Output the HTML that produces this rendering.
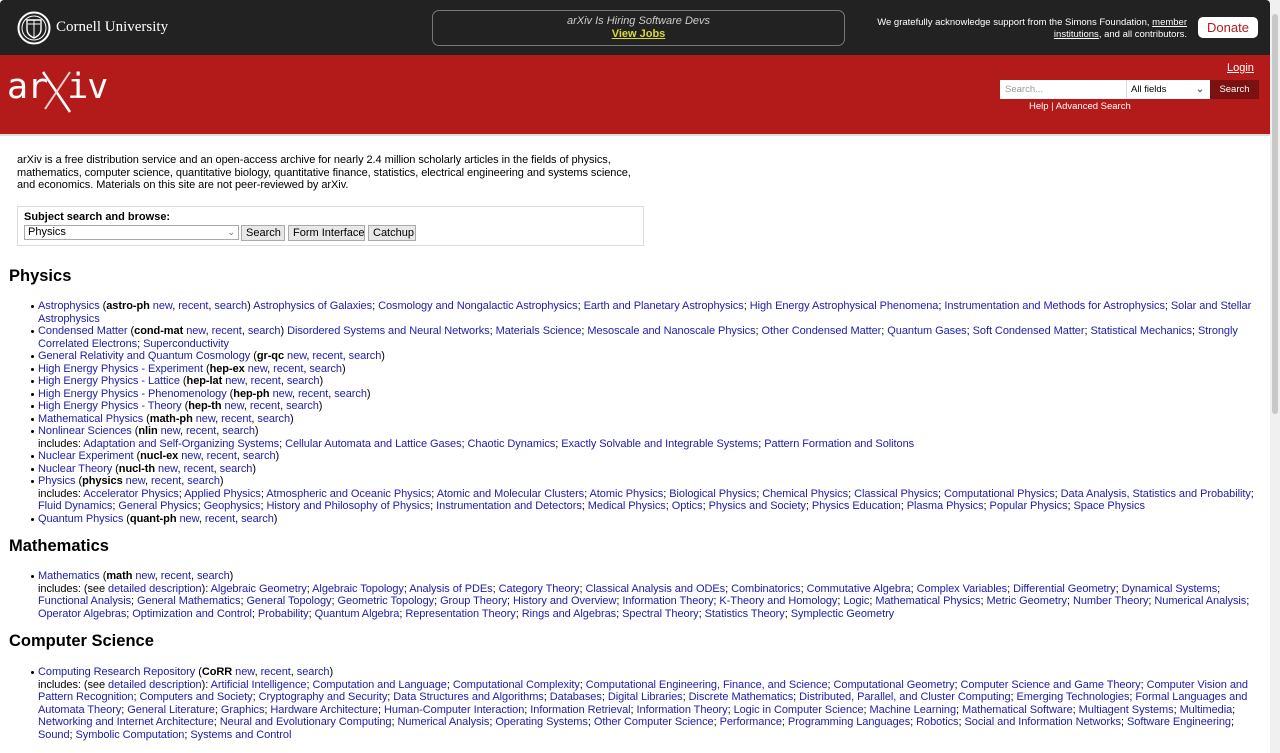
<!DOCTYPE html>
<html><head><meta charset="utf-8"><style>
*{margin:0;padding:0;box-sizing:border-box}
body{width:1280px;height:753px;overflow:hidden;background:#fff;font-family:"Liberation Sans",Arial,sans-serif;font-size:11px;color:#000;position:relative}
a{color:#1d1da8;text-decoration:none}
.top{position:absolute;left:0;top:0;width:1270px;height:55px;background:#222;border-radius:4px 4px 0 0}
.red{position:absolute;left:0;top:55px;width:1270px;height:81px;background:#b31b1b;border-bottom:2px solid #ddd}
.sb{position:absolute;right:0;top:0;width:10px;height:753px;background:#f0f0f0}
.sb i{position:absolute;left:2px;top:14px;width:6px;height:400px;background:#c8c8c8;border-radius:3px}
.abs{position:absolute}
.l{height:12.5px;line-height:12.5px;white-space:nowrap;letter-spacing:-0.06px}
ul{list-style:none}
li{position:relative}
li.b::before{content:"";position:absolute;left:-7px;top:5px;width:3px;height:3px;border-radius:50%;background:#000}
h2{position:absolute;left:9px;font-size:16.5px;font-weight:bold}
b{font-weight:bold;color:#000}
button{font-family:inherit;font-size:11px;background:#e8e8e8;border:1px solid #aaa;height:16px;padding:0 4px;position:absolute;top:0;white-space:nowrap}
</style></head><body>
<div class="top">
 <svg class="abs" style="left:17px;top:11px" width="34" height="34" viewBox="0 0 34 34"><circle cx="17" cy="17" r="15.5" fill="none" stroke="#fff" stroke-width="2"/><circle cx="17" cy="17" r="12" fill="none" stroke="#fff" stroke-width="1"/><path d="M10 9h14v9c0 5-3 7-7 9-4-2-7-4-7-9z" fill="none" stroke="#fff" stroke-width="1.4"/><path d="M11 13h12M17 9v17" stroke="#fff"/></svg>
 <div class="abs" style="left:56px;top:19px;color:#fff;font-family:'Liberation Serif',serif;font-size:15px">Cornell University</div>
 <div class="abs" style="left:432px;top:10px;width:413px;height:36px;border:1px solid #777;border-radius:7px;text-align:center">
  <div style="color:#ccc;font-style:italic;margin-top:4px">arXiv Is Hiring Software Devs</div>
  <div style="color:#d7d93a;text-decoration:underline;font-weight:bold;margin-top:1px">View Jobs</div>
 </div>
 <div class="abs" style="right:83px;top:17px;color:#fff;font-size:9.5px;text-align:right;line-height:12px">We gratefully acknowledge support from the Simons Foundation, <u>member</u><br><u>institutions</u>, and all contributors.</div>
 <div class="abs" style="left:1198px;top:17px;width:60px;height:21px;background:#fff;border-radius:5px;color:#b31b1b;font-size:13px;text-align:center;line-height:21px">Donate</div>
</div>
<div class="red">
 <div class="abs" style="left:7px;top:12px;color:#fff;font-family:'DejaVu Sans Mono',monospace;font-size:35px;letter-spacing:-1px">ar<span style="opacity:0">X</span>iv</div>
 <svg class="abs" style="left:40px;top:14px" width="34" height="46"><path d="M3 3L30 43" stroke="#fff" stroke-width="2.5"/><path d="M30 3L5 40" stroke="#f0d0d0" stroke-width="2"/></svg>
 <div class="abs" style="left:1227px;top:7px;color:#fff;text-decoration:underline;font-size:11px">Login</div>
 <div class="abs" style="left:1000px;top:25px;width:126px;height:19px;background:#fff;color:#999;font-size:9.5px;line-height:19px;padding-left:5px">Search...</div>
 <div class="abs" style="left:1126px;top:25px;width:84px;height:19px;background:#fff;border-left:1px solid #ddd;font-size:9.5px;line-height:19px;padding-left:4px">All fields<span style="position:absolute;right:6px;color:#3a6fb0;font-weight:bold">&#8964;</span></div>
 <div class="abs" style="left:1210px;top:25px;width:49px;height:19px;background:#7a1212;color:#fff;font-size:9.5px;line-height:19px;text-align:center">Search</div>
 <div class="abs" style="left:1029px;top:46px;color:#fff;font-size:9.5px">Help | Advanced Search</div>
</div>
<div class="sb"><i></i></div>

<div class="abs" style="left:17px;top:154px">
 <div class="l">arXiv is a free distribution service and an open-access archive for nearly 2.4 million scholarly articles in the fields of physics,</div>
 <div class="l">mathematics, computer science, quantitative biology, quantitative finance, statistics, electrical engineering and systems science,</div>
 <div class="l">and economics. Materials on this site are not peer-reviewed by arXiv.</div>
</div>
<div class="abs" style="left:17px;top:206px;width:627px;height:40px;border:1px solid #ddd">
 <div class="abs" style="left:6px;top:4px;font-weight:bold">Subject search and browse:</div>
 <div class="abs" style="left:6px;top:18px;width:215px;height:14px">
  <div class="abs" style="left:0;top:0;width:215px;height:15px;border:1px solid #aaa;padding-left:3px;line-height:13px">Physics<span style="position:absolute;right:3px;color:#666;font-size:9px">&#8964;</span></div>
  <button style="left:217px;width:44px">Search</button>
  <button style="left:264px;width:77px">Form Interface</button>
  <button style="left:344px;width:48px">Catchup</button>
 </div>
</div>

<h2 style="top:267px">Physics</h2>
<ul class="abs" style="left:38px;top:300px">
<li class="b"><div class="l"><a>Astrophysics</a> (<b>astro-ph</b> <a>new</a>, <a>recent</a>, <a>search</a>) <a>Astrophysics of Galaxies</a>; <a>Cosmology and Nongalactic Astrophysics</a>; <a>Earth and Planetary Astrophysics</a>; <a>High Energy Astrophysical Phenomena</a>; <a>Instrumentation and Methods for Astrophysics</a>; <a>Solar and Stellar</a></div><div class="l"><a>Astrophysics</a></div></li>
<li class="b"><div class="l"><a>Condensed Matter</a> (<b>cond-mat</b> <a>new</a>, <a>recent</a>, <a>search</a>) <a>Disordered Systems and Neural Networks</a>; <a>Materials Science</a>; <a>Mesoscale and Nanoscale Physics</a>; <a>Other Condensed Matter</a>; <a>Quantum Gases</a>; <a>Soft Condensed Matter</a>; <a>Statistical Mechanics</a>; <a>Strongly</a></div><div class="l"><a>Correlated Electrons</a>; <a>Superconductivity</a></div></li>
<li class="b"><div class="l"><a>General Relativity and Quantum Cosmology</a> (<b>gr-qc</b> <a>new</a>, <a>recent</a>, <a>search</a>)</div></li>
<li class="b"><div class="l"><a>High Energy Physics - Experiment</a> (<b>hep-ex</b> <a>new</a>, <a>recent</a>, <a>search</a>)</div></li>
<li class="b"><div class="l"><a>High Energy Physics - Lattice</a> (<b>hep-lat</b> <a>new</a>, <a>recent</a>, <a>search</a>)</div></li>
<li class="b"><div class="l"><a>High Energy Physics - Phenomenology</a> (<b>hep-ph</b> <a>new</a>, <a>recent</a>, <a>search</a>)</div></li>
<li class="b"><div class="l"><a>High Energy Physics - Theory</a> (<b>hep-th</b> <a>new</a>, <a>recent</a>, <a>search</a>)</div></li>
<li class="b"><div class="l"><a>Mathematical Physics</a> (<b>math-ph</b> <a>new</a>, <a>recent</a>, <a>search</a>)</div></li>
<li class="b"><div class="l"><a>Nonlinear Sciences</a> (<b>nlin</b> <a>new</a>, <a>recent</a>, <a>search</a>)</div><div class="l">includes: <a>Adaptation and Self-Organizing Systems</a>; <a>Cellular Automata and Lattice Gases</a>; <a>Chaotic Dynamics</a>; <a>Exactly Solvable and Integrable Systems</a>; <a>Pattern Formation and Solitons</a></div></li>
<li class="b"><div class="l"><a>Nuclear Experiment</a> (<b>nucl-ex</b> <a>new</a>, <a>recent</a>, <a>search</a>)</div></li>
<li class="b"><div class="l"><a>Nuclear Theory</a> (<b>nucl-th</b> <a>new</a>, <a>recent</a>, <a>search</a>)</div></li>
<li class="b"><div class="l"><a>Physics</a> (<b>physics</b> <a>new</a>, <a>recent</a>, <a>search</a>)</div><div class="l">includes: <a>Accelerator Physics</a>; <a>Applied Physics</a>; <a>Atmospheric and Oceanic Physics</a>; <a>Atomic and Molecular Clusters</a>; <a>Atomic Physics</a>; <a>Biological Physics</a>; <a>Chemical Physics</a>; <a>Classical Physics</a>; <a>Computational Physics</a>; <a>Data Analysis, Statistics and Probability</a>;</div><div class="l"><a>Fluid Dynamics</a>; <a>General Physics</a>; <a>Geophysics</a>; <a>History and Philosophy of Physics</a>; <a>Instrumentation and Detectors</a>; <a>Medical Physics</a>; <a>Optics</a>; <a>Physics and Society</a>; <a>Physics Education</a>; <a>Plasma Physics</a>; <a>Popular Physics</a>; <a>Space Physics</a></div></li>
<li class="b"><div class="l"><a>Quantum Physics</a> (<b>quant-ph</b> <a>new</a>, <a>recent</a>, <a>search</a>)</div></li>
</ul>

<h2 style="top:537px">Mathematics</h2>
<ul class="abs" style="left:38px;top:570px">
<li class="b"><div class="l"><a>Mathematics</a> (<b>math</b> <a>new</a>, <a>recent</a>, <a>search</a>)</div>
<div class="l">includes: (see <a>detailed description</a>): <a>Algebraic Geometry</a>; <a>Algebraic Topology</a>; <a>Analysis of PDEs</a>; <a>Category Theory</a>; <a>Classical Analysis and ODEs</a>; <a>Combinatorics</a>; <a>Commutative Algebra</a>; <a>Complex Variables</a>; <a>Differential Geometry</a>; <a>Dynamical Systems</a>;</div>
<div class="l"><a>Functional Analysis</a>; <a>General Mathematics</a>; <a>General Topology</a>; <a>Geometric Topology</a>; <a>Group Theory</a>; <a>History and Overview</a>; <a>Information Theory</a>; <a>K-Theory and Homology</a>; <a>Logic</a>; <a>Mathematical Physics</a>; <a>Metric Geometry</a>; <a>Number Theory</a>; <a>Numerical Analysis</a>;</div>
<div class="l"><a>Operator Algebras</a>; <a>Optimization and Control</a>; <a>Probability</a>; <a>Quantum Algebra</a>; <a>Representation Theory</a>; <a>Rings and Algebras</a>; <a>Spectral Theory</a>; <a>Statistics Theory</a>; <a>Symplectic Geometry</a></div></li>
</ul>

<h2 style="top:632px">Computer Science</h2>
<ul class="abs" style="left:38px;top:666px">
<li class="b"><div class="l"><a>Computing Research Repository</a> (<b>CoRR</b> <a>new</a>, <a>recent</a>, <a>search</a>)</div>
<div class="l">includes: (see <a>detailed description</a>): <a>Artificial Intelligence</a>; <a>Computation and Language</a>; <a>Computational Complexity</a>; <a>Computational Engineering, Finance, and Science</a>; <a>Computational Geometry</a>; <a>Computer Science and Game Theory</a>; <a>Computer Vision and</a></div>
<div class="l"><a>Pattern Recognition</a>; <a>Computers and Society</a>; <a>Cryptography and Security</a>; <a>Data Structures and Algorithms</a>; <a>Databases</a>; <a>Digital Libraries</a>; <a>Discrete Mathematics</a>; <a>Distributed, Parallel, and Cluster Computing</a>; <a>Emerging Technologies</a>; <a>Formal Languages and</a></div>
<div class="l"><a>Automata Theory</a>; <a>General Literature</a>; <a>Graphics</a>; <a>Hardware Architecture</a>; <a>Human-Computer Interaction</a>; <a>Information Retrieval</a>; <a>Information Theory</a>; <a>Logic in Computer Science</a>; <a>Machine Learning</a>; <a>Mathematical Software</a>; <a>Multiagent Systems</a>; <a>Multimedia</a>;</div>
<div class="l"><a>Networking and Internet Architecture</a>; <a>Neural and Evolutionary Computing</a>; <a>Numerical Analysis</a>; <a>Operating Systems</a>; <a>Other Computer Science</a>; <a>Performance</a>; <a>Programming Languages</a>; <a>Robotics</a>; <a>Social and Information Networks</a>; <a>Software Engineering</a>;</div>
<div class="l"><a>Sound</a>; <a>Symbolic Computation</a>; <a>Systems and Control</a></div></li>
</ul>
</body></html>
